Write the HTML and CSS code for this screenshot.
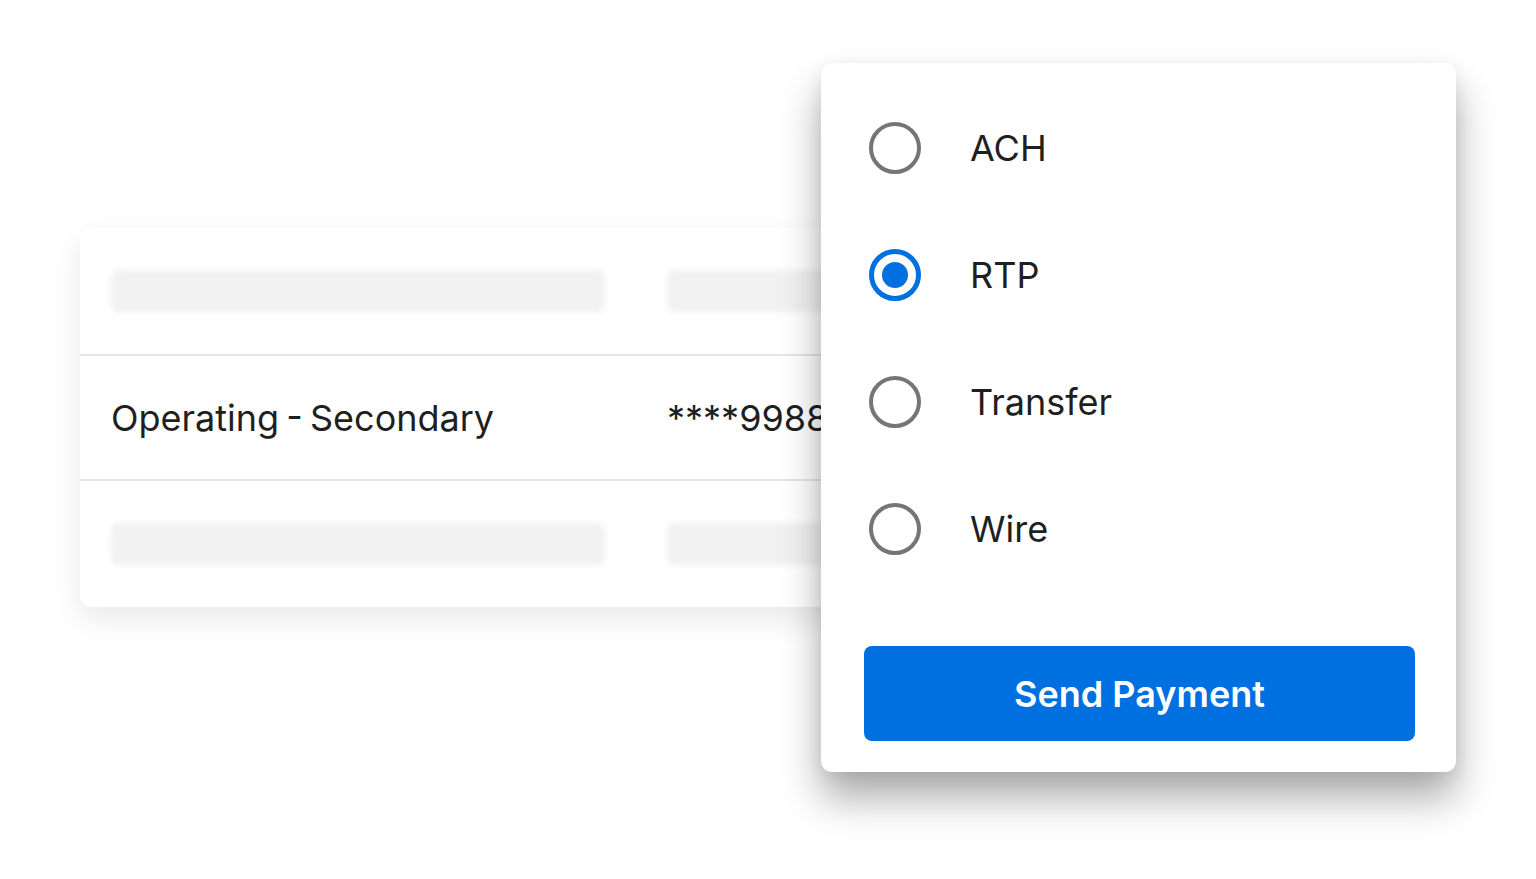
FILE: index.html
```html
<!DOCTYPE html>
<html lang="en">
<head>
    <meta charset="UTF-8">
    <meta name="viewport" content="width=device-width, initial-scale=1.0">
    <title>Send Payment</title>
    <link rel="stylesheet" href="styles.css">
</head>
<body>
    <div class="stage">
        <div class="accounts">
            <div class="row">
                <div class="bar bar-wide"></div>
                <div class="bar bar-short"></div>
            </div>
            <div class="row row-main">
                <div class="name">Operating - Secondary</div>
                <div class="number">****9988</div>
            </div>
            <div class="row">
                <div class="bar bar-wide"></div>
                <div class="bar bar-short"></div>
            </div>
        </div>

        <div class="popup">
            <label class="option">
                <span class="radio"></span>
                <span class="label">ACH</span>
            </label>
            <label class="option">
                <span class="radio checked"></span>
                <span class="label">RTP</span>
            </label>
            <label class="option">
                <span class="radio"></span>
                <span class="label">Transfer</span>
            </label>
            <label class="option">
                <span class="radio"></span>
                <span class="label">Wire</span>
            </label>
            <button class="send">Send Payment</button>
        </div>
    </div>
</body>
</html>
```

FILE: styles.css
```css
body {
    margin: 0;
    background: #fff;
    font-family: Inter, "Liberation Sans", sans-serif;
    color: #1f1f1f;
}
.stage {
    position: relative;
    width: 1536px;
    height: 879px;
    overflow: hidden;
    padding-top: 228px;
    box-sizing: border-box;
}
.accounts {
    margin-left: 80px;
    width: 820px;
    background: #fff;
    border-radius: 10px;
    box-shadow: 0 12px 30px rgba(0, 0, 0, 0.09);
}
.row {
    display: grid;
    grid-template-columns: 556px 1fr;
    align-items: center;
    height: 126px;
    padding-left: 31px;
    border-bottom: 2px solid #e6e6e6;
}
.row-main {
    height: 123px;
}
.row:last-child {
    border-bottom: none;
    height: 126px;
}
.bar {
    height: 42px;
    background: #f1f1f1;
    border-radius: 8px;
    filter: blur(3px);
}
.bar-wide {
    width: 494px;
}
.bar-short {
    width: 200px;
}
.name, .number {
    font-size: 36px;
}
.name {
    word-spacing: -3px;
}
.popup {
    position: absolute;
    left: 821px;
    top: 63px;
    width: 635px;
    height: 709px;
    box-sizing: border-box;
    padding: 21px 42px 0 48px;
    background: #fff;
    border-radius: 11px;
    box-shadow: 0 26px 40px rgba(0, 0, 0, 0.33), 0 4px 16px rgba(0, 0, 0, 0.07);
}
.option {
    display: flex;
    align-items: center;
    height: 127px;
    gap: 49px;
}
.radio {
    width: 52px;
    height: 52px;
    box-sizing: border-box;
    border: 4px solid #757575;
    border-radius: 50%;
    display: flex;
    align-items: center;
    justify-content: center;
}
.radio.checked {
    border: 5px solid #006fe0;
}
.radio.checked::after {
    content: "";
    width: 26px;
    height: 26px;
    border-radius: 50%;
    background: #006fe0;
}
.label {
    font-size: 36px;
}
.send {
    display: block;
    width: 551px;
    height: 95px;
    margin: 54px 0 0 -5px;
    border: none;
    border-radius: 8px;
    background: #006fe0;
    color: #fff;
    font-family: inherit;
    font-size: 36px;
    font-weight: 600;
}
```
